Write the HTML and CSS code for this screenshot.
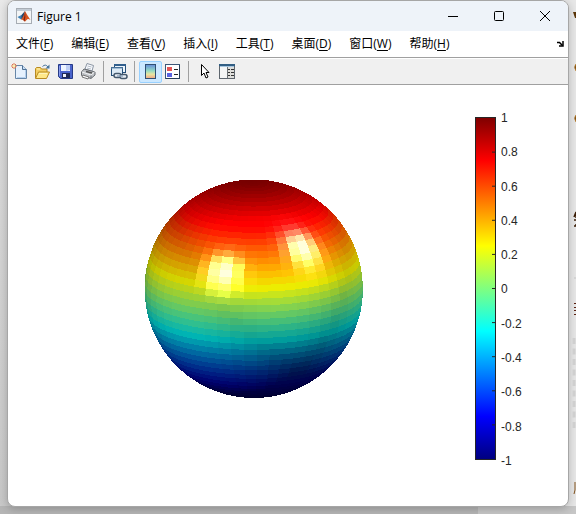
FILE: index.html
```html
<!DOCTYPE html>
<html lang="zh-CN">
<head>
<meta charset="utf-8">
<title>Figure 1</title>
<link rel="stylesheet" href="styles.css">
</head>
<body>
<div class="desktop">
  <svg class="desktop-edge" width="5" height="514" viewBox="0 0 5 514" aria-hidden="true">
    <path d="M2 12h3v6h-1l-1-3z" fill="#5a3508"/>
    <path d="M5 64q-3 3 0 7zM5 115q-3 3 0 7z" fill="#5a3508" stroke="#c98a30" stroke-width=".6"/>
    <path d="M3 217l2-5v6M3 220h2M3 226h2v-2" fill="none" stroke="#3a1c05" stroke-width="1.5"/>
    <path d="M3 303.500h2M3 307.500h2M3 310.500h2M3 314.500h2" stroke="#5a2010"/>
    <path d="M3 278h2" stroke="#c4c4c4"/>
    <path d="M3 338v90" stroke="#cfcfcf" stroke-width="3" stroke-dasharray="6 4.5"/>
    <path d="M4 482v8l-1 4" stroke="#80501a" fill="none"/>
  </svg>
  <main class="window">
    <header class="titlebar">
      <svg class="logo" width="16" height="16" viewBox="0 0 16 16" aria-hidden="true">
        <rect x=".5" y=".5" width="15" height="15" fill="#f3f5f6" stroke="#a7adb4"/>
        <path d="M1 1h14v2H1z" fill="#c3ccd5"/>
        <path d="M1.500 9l4-2 2 2-2.500 2.500z" fill="#3b7fb5"/>
        <path d="M5.500 7L9 3l-1 5-2.500 3.500z" fill="#23486e"/>
        <path d="M5 11.500Q7.500 9 9 3q2 4 5.500 9-2.500-2-4 0-1 1.500-2 1.500-1-2-3.500-2z" fill="#d9541e"/>
        <path d="M9 3q-.5 6-1.500 9l1 1.500Q10 9 9 3z" fill="#7c2416"/>
      </svg>
      <h1 class="title">Figure 1</h1>
      <div class="controls">
        <button class="control" aria-label="最小化"><svg width="12" height="12" viewBox="0 0 12 12"><path d="M1 6.500h10" stroke="#000"/></svg></button>
        <button class="control" aria-label="最大化"><svg width="12" height="12" viewBox="0 0 12 12"><rect x="1.500" y="1.500" width="9" height="9" rx="1" fill="none" stroke="#000"/></svg></button>
        <button class="control" aria-label="关闭"><svg width="12" height="12" viewBox="0 0 12 12"><path d="M1 1l10 10M11 1L1 11" stroke="#000"/></svg></button>
      </div>
    </header>
    <nav class="menubar">
      <button class="menu">文件(<u>F</u>)</button>
      <button class="menu">编辑(<u>E</u>)</button>
      <button class="menu">查看(<u>V</u>)</button>
      <button class="menu">插入(<u>I</u>)</button>
      <button class="menu">工具(<u>T</u>)</button>
      <button class="menu">桌面(<u>D</u>)</button>
      <button class="menu">窗口(<u>W</u>)</button>
      <button class="menu">帮助(<u>H</u>)</button>
      <button class="dock" aria-label="停靠"><svg width="7" height="6" viewBox="0 0 7 6"><path d="M0 1.500h2.500l3 3" fill="none" stroke="#000" stroke-width="1.500"/><path d="M6 0v5H2" fill="none" stroke="#000" stroke-width="1.500"/></svg></button>
    </nav>
    <div class="toolbar" role="toolbar">
      <button class="tool" aria-label="新建"><svg width="17" height="17" viewBox="0 0 17 17">
        <path d="M4.500 2.500h7l4 4v9h-11z" fill="#e6f1fd" stroke="#6686a8"/><path d="M14.500 7v7.500H6" fill="none" stroke="#b4d0ee"/><path d="M11.500 2.500v4h4" fill="#c9def4" stroke="#4f7194"/>
        <path d="M3 0v6M0 3h6M1 1l4 4M5 1L1 5" stroke="#dd7650"/><circle cx="3" cy="3" r="1.300" fill="#fff0a8"/></svg></button>
      <button class="tool" aria-label="打开"><svg width="17" height="17" viewBox="0 0 17 17">
        <path d="M1.500 15V5.500l1-1h4l1 1.500h5.500v3" fill="#f4cf62" stroke="#b88a22"/><path d="M1.500 15.500l3-6.500h11l-3 6.500z" fill="#ffe889" stroke="#b88a22"/><path d="M3 6h3M5 10.500h8" stroke="#fff5bc"/>
        <path d="M8.500 3.500q3-3 5.500.5" fill="none" stroke="#48749b"/><path d="M15.500 1.500v4h-4z" fill="#48749b"/></svg></button>
      <button class="tool" aria-label="保存"><svg width="17" height="17" viewBox="0 0 17 17">
        <path d="M1.500 1.500h14v14h-12l-2-2z" fill="#4963cb" stroke="#263a86"/><path d="M4 2h9v6H4z" fill="#eef4ff"/><path d="M9 2h4v5L9 8z" fill="#bfcff5"/><path d="M5 10h8v5H5z" fill="#1e2a57"/><path d="M6 11h3v3H6z" fill="#eef1f8"/><path d="M2.500 3v10" stroke="#899ded"/></svg></button>
      <button class="tool" aria-label="打印"><svg width="17" height="17" viewBox="0 0 17 17">
        <path d="M5 6l2-5.500 6.500 2L12 8z" fill="#fafcff" stroke="#8a94a2"/><path d="M7.500 3l4 1M7 5l4 1" stroke="#b5bdc8"/>
        <path d="M1.500 9L4 6l11 3v3l-4 3.500-9.500-3z" fill="#bfc2c6" stroke="#676b70"/><path d="M2 9l9 3 3.500-3" fill="none" stroke="#f0f1f2"/><path d="M11 12.500V15" stroke="#696d72"/><path d="M3 12l6 2-1 2-6-2z" fill="#f4f4f4" stroke="#777"/><path d="M6 8.500l6 1.500" stroke="#555" stroke-width="1.500"/></svg></button>
      <span class="separator"></span>
      <button class="tool" aria-label="链接绘图"><svg width="17" height="17" viewBox="0 0 17 17">
        <rect x="3.500" y="1.500" width="11" height="8" fill="#edf5fc" stroke="#254f78"/><path d="M3 2h12" stroke="#315f8d" stroke-width="2"/><rect x=".5" y="4.500" width="11" height="8" fill="#dceaf5" stroke="#254f78"/><path d="M0 5h12" stroke="#6990b5"/>
        <rect x="3" y="10.500" width="7" height="4" rx="2" fill="#e8eef4" stroke="#45596d" stroke-width="1.500"/><rect x="9" y="11.500" width="7" height="4" rx="2" fill="#e8eef4" stroke="#45596d" stroke-width="1.500"/><path d="M6 13h6" stroke="#8fa6be" stroke-width="1.500"/></svg></button>
      <span class="separator"></span>
      <button class="tool tool-on" aria-label="插入颜色栏" aria-pressed="true"><svg width="17" height="17" viewBox="0 0 17 17">
        <defs><linearGradient id="mini" x2="0" y2="1"><stop offset="0" stop-color="#648bd9"/><stop offset=".45" stop-color="#94dbc3"/><stop offset=".7" stop-color="#e9e5a0"/><stop offset="1" stop-color="#efa386"/></linearGradient></defs>
        <rect x="3.500" y="1.500" width="10" height="14" fill="url(#mini)" stroke="#304f73"/></svg></button>
      <button class="tool" aria-label="插入图例"><svg width="17" height="17" viewBox="0 0 17 17">
        <rect x=".5" y="1.500" width="14" height="14" fill="#fdfeff" stroke="#3c5777"/><path d="M14.500 2v13.500H1" stroke="#253c58" fill="none"/><path d="M2 4h5v4H2z" fill="#e55555"/><path d="M2 10h5v4H2z" fill="#5963e0"/><path d="M9 6.500h4M9 11.500h4" stroke="#222"/></svg></button>
      <span class="separator"></span>
      <button class="tool" aria-label="编辑绘图"><svg width="17" height="17" viewBox="0 0 17 17">
        <path d="M5.500 1.500v11l2.500-2.500 2 5 2-1-2-4.500h3z" fill="#fff" stroke="#000"/></svg></button>
      <button class="tool" aria-label="属性检查器"><svg width="17" height="17" viewBox="0 0 17 17">
        <rect x=".5" y="1.500" width="15" height="14" fill="#f4f5f5" stroke="#5e666e"/><path d="M0 2h16" stroke="#315e83" stroke-width="2"/><path d="M1 3.500h14" stroke="#a7c6df"/><path d="M8.500 4v11" stroke="#6d7377"/><path d="M9 4h6v11H9z" fill="#dededb"/><path d="M9 6.500h2M9 9.500h2M9 12.500h2M12 6.500h3M12 9.500h3M12 12.500h3" stroke="#333"/></svg></button>
    </div>
    <section class="figure">
      <div class="plot"><svg id="sphere" class="sphere" viewBox="-111 -111 222 222" role="img" aria-label="球面"></svg></div>
      <div class="colorbar">
        <div class="ramp">
          <svg class="ticks" aria-hidden="true">
            <g stroke="#262626">
              <line x1="16" x2="19" y1="10%" y2="10%"/><line x1="16" x2="19" y1="20%" y2="20%"/><line x1="16" x2="19" y1="30%" y2="30%"/>
              <line x1="16" x2="19" y1="40%" y2="40%"/><line x1="16" x2="19" y1="50%" y2="50%"/><line x1="16" x2="19" y1="60%" y2="60%"/>
              <line x1="16" x2="19" y1="70%" y2="70%"/><line x1="16" x2="19" y1="80%" y2="80%"/><line x1="16" x2="19" y1="90%" y2="90%"/>
            </g>
          </svg>
        </div>
        <ol class="scale">
          <li>1</li><li>0.8</li><li>0.6</li><li>0.4</li><li>0.2</li><li>0</li><li>-0.2</li><li>-0.4</li><li>-0.6</li><li>-0.8</li><li>-1</li>
        </ol>
      </div>
    </section>
  </main>
</div>
<script src="sphere.js"></script>
</body>
</html>
```
FILE: styles.css
```css
* {
  box-sizing: border-box;
}

body {
  margin: 0;
  font-family: "Open Sans", "Noto Sans CJK SC", sans-serif;
  font-size: 12px;
  color: #000;
}

button {
  margin: 0;
  padding: 0;
  border: 0;
  background: none;
  font: inherit;
  color: inherit;
}

svg {
  display: block;
}

.desktop {
  position: relative;
  display: flex;
  min-height: 100vh;
  padding: 0 7px 7px;
  background:
    linear-gradient(to right, #b5b5b5, #b5b5b5 83%, #c6c6c6 83%) bottom / 100% 8px no-repeat,
    linear-gradient(to right, transparent 50%, #e7e7e7 50%),
    linear-gradient(#e9e9e9, #d8d8d8 30%, #c8c8c8);
  overflow: hidden;
}

.desktop-edge {
  position: absolute;
  top: 0;
  right: 0;
}

.window {
  flex: 1;
  display: flex;
  flex-direction: column;
  border: 1px solid #a6a6a6;
  border-radius: 8px;
  background: #fff;
  box-shadow: 0 2px 8px rgba(0, 0, 0, 0.22);
  overflow: hidden;
}

.titlebar {
  display: flex;
  align-items: center;
  height: 30px;
  padding-left: 8px;
  background: #eef3f9;
}

.title {
  flex: 1;
  margin: 0 0 0 5px;
  font-size: 12px;
  font-weight: 400;
}

.controls {
  display: flex;
}

.control {
  display: grid;
  place-items: center;
  width: 46px;
  height: 28px;
}

.menubar {
  display: flex;
  align-items: center;
  gap: 18px;
  height: 27px;
  padding: 0 4px 0 8px;
  border-bottom: 1px solid #a0a0a0;
  line-height: 18px;
}

.menu {
  white-space: nowrap;
}

.menu u {
  text-underline-offset: 2px;
}

.dock {
  margin-left: auto;
}

.toolbar {
  display: flex;
  align-items: center;
  height: 27px;
  border-top: 1px solid #fff;
  border-bottom: 1px solid #a0a0a0;
  background: #f0f0f0;
}

.tool {
  display: grid;
  place-items: center;
  width: 23px;
  height: 22px;
  border: 1px solid transparent;
  border-radius: 2px;
}

.tool-on {
  border-color: #99d1ff;
  background: #cce8ff;
}

.separator {
  width: 1px;
  height: 21px;
  margin: 0 4px 0 3px;
  background: #a0a0a0;
}

.figure {
  flex: 1;
  display: flex;
  padding: 32px 37px 46px 24px;
}

.plot {
  flex: 1;
  display: grid;
  place-items: center;
}

.sphere {
  width: 50%;
  max-height: 64vh;
  aspect-ratio: 1;
}

.colorbar {
  display: flex;
  gap: 5px;
}

.ramp {
  width: 21px;
  border: 1px solid #262626;
  background: linear-gradient(#800000, #f00 12.5%, #ff0 37.5%, #0ff 62.5%, #00f 87.5%, #000080);
}

.ticks {
  width: 100%;
  height: 100%;
}

.scale {
  display: flex;
  flex-direction: column;
  justify-content: space-between;
  width: 30px;
  margin: -6px 0 -8px;
  padding: 0;
  list-style: none;
  font-family: "Liberation Sans", sans-serif;
  line-height: 14px;
  color: #262626;
}
```
FILE: sphere.js
```js
// Lit sphere made of 50 x 50 flat facets, coloured by height with a jet map.
(function () {
  var N = 50;
  var R = 109.5;
  var rad = Math.PI / 180;
  var elevation = 16 * rad;
  var offset = 1.8 * rad;
  var ambient = 0.3;
  var diffuse = 0.55;
  var specular = 0.9;
  var shininess = 22;
  // Surface directions (x right, y up, z to the viewer) where each highlight sits.
  var lights = [[-0.28, 0.15], [0.44, 0.38]].map(function (p) {
    var nz = Math.sqrt(1 - p[0] * p[0] - p[1] * p[1]);
    return [2 * nz * p[0], 2 * nz * p[1], 2 * nz * nz - 1];
  });

  function clamp(v) {
    return Math.max(0, Math.min(1, v));
  }

  function jet(z) {
    var v = (z + 1) * 2;
    return [clamp(1.5 - Math.abs(v - 3)), clamp(1.5 - Math.abs(v - 2)), clamp(1.5 - Math.abs(v - 1))];
  }

  function point(lat, lon) {
    var x = Math.cos(lat) * Math.sin(lon);
    var y = Math.sin(lat);
    var z = Math.cos(lat) * Math.cos(lon);
    return [x, y * Math.cos(elevation) - z * Math.sin(elevation), y * Math.sin(elevation) + z * Math.cos(elevation)];
  }

  function dot(a, b) {
    return a[0] * b[0] + a[1] * b[1] + a[2] * b[2];
  }

  var facets = [];
  for (var i = 0; i < N; i++) {
    for (var j = 0; j < N; j++) {
      var lat = -Math.PI / 2 + i * Math.PI / N;
      var lon = offset + j * 2 * Math.PI / N;
      var dLat = Math.PI / N;
      var dLon = 2 * Math.PI / N;
      var n = point(lat + dLat / 2, lon + dLon / 2);
      if (n[2] < -0.1) continue;
      var base = jet(Math.sin(lat));
      var level = ambient;
      var shine = 0;
      lights.forEach(function (light) {
        var d = dot(n, light);
        if (d <= 0) return;
        level += diffuse * d;
        shine += specular * Math.pow(Math.max(0, 2 * d * n[2] - light[2]), shininess);
      });
      var rgb = base.map(function (c) {
        return Math.round(255 * clamp(c * level + shine));
      });
      var corners = [point(lat, lon), point(lat, lon + dLon), point(lat + dLat, lon + dLon), point(lat + dLat, lon)];
      facets.push({ depth: n[2], rgb: rgb, corners: corners });
    }
  }
  facets.sort(function (a, b) {
    return a.depth - b.depth;
  });

  var svg = document.getElementById('sphere');
  facets.forEach(function (f) {
    var polygon = document.createElementNS('http://www.w3.org/2000/svg', 'polygon');
    polygon.setAttribute('points', f.corners.map(function (c) {
      return (c[0] * R).toFixed(2) + ',' + (-c[1] * R).toFixed(2);
    }).join(' '));
    polygon.setAttribute('fill', 'rgb(' + f.rgb.join(',') + ')');
    polygon.setAttribute('shape-rendering', 'crispEdges');
    svg.appendChild(polygon);
  });
})();
```
